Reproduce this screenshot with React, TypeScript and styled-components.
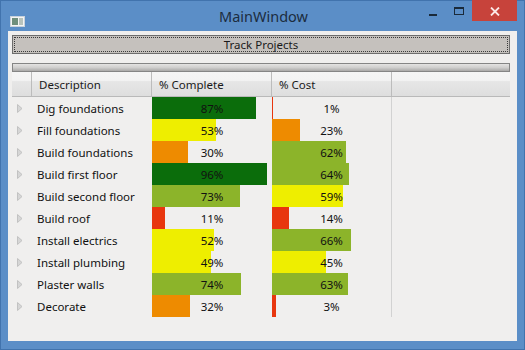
import React from 'react';
import styled, { createGlobalStyle } from 'styled-components';

const Global = createGlobalStyle`
  html, body { margin: 0; padding: 0; width: 525px; height: 350px; overflow: hidden; }
  body { font-family: "Noto Sans", "Open Sans", sans-serif; }
`;

type Task = { name: string; complete: number; cost: number };

const tasks: Task[] = [
  { name: 'Dig foundations', complete: 87, cost: 1 },
  { name: 'Fill foundations', complete: 53, cost: 23 },
  { name: 'Build foundations', complete: 30, cost: 62 },
  { name: 'Build first floor', complete: 96, cost: 64 },
  { name: 'Build second floor', complete: 73, cost: 59 },
  { name: 'Build roof', complete: 11, cost: 14 },
  { name: 'Install electrics', complete: 52, cost: 66 },
  { name: 'Install plumbing', complete: 49, cost: 45 },
  { name: 'Plaster walls', complete: 74, cost: 63 },
  { name: 'Decorate', complete: 32, cost: 3 },
];

const colourFor = (p: number) => {
  if (p < 20) return '#e8360e';
  if (p < 40) return '#ee8b00';
  if (p < 60) return '#eeee00';
  if (p < 80) return '#8cb42a';
  return '#0b6d0b';
};

const Window = styled.div`
  width: 525px;
  height: 350px;
  box-sizing: border-box;
  background: #5b8ec7;
  border: 1px solid #4173ad;
  display: flex;
  flex-direction: column;
`;

const TitleBar = styled.div`
  height: 30px;
  flex: none;
  display: grid;
  grid-template-columns: 1fr auto 1fr;
  align-items: start;
  padding: 0 7px 0 9px;
`;

const AppIcon = styled.div`
  margin-top: 9px;
  width: 15px;
  height: 11px;
`;

const Title = styled.div`
  font-size: 14.5px;
  line-height: 31px;
  color: #1c2c3e;
`;

const Controls = styled.div`
  display: flex;
  justify-content: flex-end;
  align-items: flex-start;
  margin-top: -1px;
`;

const CtlButton = styled.div<{ $w: number; $close?: boolean }>`
  width: ${(p) => p.$w}px;
  height: 21px;
  display: flex;
  justify-content: center;
  align-items: flex-start;
  background: ${(p) => (p.$close ? '#c7433b' : 'transparent')};
`;

const MinGlyph = styled.div`
  width: 8px;
  height: 2px;
  margin-top: 14px;
  background: #1a2a3a;
`;

const MaxGlyph = styled.div`
  width: 10px;
  height: 8px;
  margin-top: 7px;
  box-sizing: border-box;
  border: 1px solid #1a2a3a;
  border-top-width: 2px;
`;

const Frame = styled.div`
  flex: 1;
  padding: 0 7px 8px 7px;
  display: flex;
`;

const Client = styled.div`
  flex: 1;
  background: #f0efee;
  padding: 4px 7px 0 4px;
  display: flex;
  flex-direction: column;
`;

const TrackButton = styled.button`
  height: 19px;
  box-sizing: border-box;
  border: 1px solid #6d6d6d;
  background: #c5c1bd;
  font-family: inherit;
  font-size: 11.5px;
  color: #1a1a1a;
  padding: 0;
  outline: 1px dotted #3a3a3a;
  outline-offset: -3px;
  line-height: 16px;
`;

const Progress = styled.div`
  margin-top: 9px;
  height: 9px;
  box-sizing: border-box;
  border: 1px solid #858585;
  background: linear-gradient(to bottom, #e4e3e2 0%, #d0cfce 50%, #a9a8a7 100%);
`;

const GRID = '20px 120px 120px 120px 1fr';

const Header = styled.div`
  display: grid;
  grid-template-columns: ${GRID};
  height: 25px;
  box-sizing: border-box;
  border-bottom: 1px solid #b9b9b9;
  background: linear-gradient(to bottom, #f5f5f5 0%, #f3f3f3 35%, #e6e6e6 40%, #dedede 100%);
`;

const HeaderCell = styled.div<{ $last?: boolean }>`
  border-right: ${(p) => (p.$last ? 'none' : '1px solid #bcbcbc')};
  font-size: 11.5px;
  color: #1a1a1a;
  padding-left: 7px;
  display: flex;
  align-items: center;
`;

const Row = styled.div`
  display: grid;
  grid-template-columns: ${GRID};
  height: 22px;
`;

const ExpanderCell = styled.div`
  display: flex;
  align-items: center;
  padding-left: 5px;
`;

const NameCell = styled.div`
  font-size: 11.5px;
  color: #111;
  padding-left: 5px;
  display: flex;
  align-items: center;
  white-space: nowrap;
`;

const BarCell = styled.div<{ $rule?: boolean }>`
  display: grid;
  grid-template-areas: 'stack';
  border-right: ${(p) => (p.$rule ? '1px solid #d2d2d2' : 'none')};
`;

const Bar = styled.div<{ $colour: string }>`
  grid-area: stack;
  height: 22px;
  background: ${(p) => p.$colour};
`;

const BarText = styled.div`
  grid-area: stack;
  font-size: 11.5px;
  color: #111;
  display: flex;
  align-items: center;
  justify-content: center;
`;

const Expander = () => (
  <svg width="6" height="9" viewBox="0 0 6 9">
    <path d="M0.5 0.5 L5 4.5 L0.5 8.5 Z" fill="#d6d6d6" stroke="#c2c2c2" strokeWidth="1" />
  </svg>
);

const PercentCell = ({ value, rule }: { value: number; rule?: boolean }) => (
  <BarCell $rule={rule}>
    <Bar $colour={colourFor(value)} style={{ width: `${(value * 120) / 100}px` }} />
    <BarText>{value}%</BarText>
  </BarCell>
);

export default function App() {
  return (
    <>
      <Global />
      <Window>
        <TitleBar>
          <div>
            <AppIcon>
              <svg width="15" height="11" viewBox="0 0 15 11">
                <rect x="0.5" y="0.5" width="14" height="10" fill="#f4f4f4" stroke="#c9d3dc" />
                <rect x="2" y="2" width="6" height="7" fill="#6f8f7c" />
                <rect x="9" y="2" width="4" height="7" fill="#b9c3bc" />
              </svg>
            </AppIcon>
          </div>
          <Title>MainWindow</Title>
          <Controls>
            <CtlButton $w={26}>
              <MinGlyph />
            </CtlButton>
            <CtlButton $w={26}>
              <MaxGlyph />
            </CtlButton>
            <CtlButton $w={45} $close>
              <svg width="10" height="9" viewBox="0 0 10 9" style={{ marginTop: 7 }}>
                <path d="M1 0.5 L9 8.5 M9 0.5 L1 8.5" stroke="#fbe7e6" strokeWidth="1.8" />
              </svg>
            </CtlButton>
          </Controls>
        </TitleBar>
        <Frame>
          <Client>
            <TrackButton>Track Projects</TrackButton>
            <Progress />
            <Header>
              <HeaderCell />
              <HeaderCell>Description</HeaderCell>
              <HeaderCell>% Complete</HeaderCell>
              <HeaderCell>% Cost</HeaderCell>
              <HeaderCell $last />
            </Header>
            {tasks.map((t) => (
              <Row key={t.name}>
                <ExpanderCell>
                  <Expander />
                </ExpanderCell>
                <NameCell>{t.name}</NameCell>
                <PercentCell value={t.complete} />
                <PercentCell value={t.cost} rule />
                <div />
              </Row>
            ))}
          </Client>
        </Frame>
      </Window>
    </>
  );
}
